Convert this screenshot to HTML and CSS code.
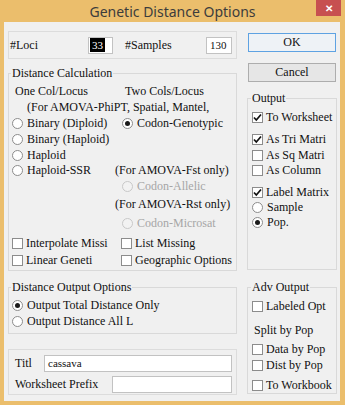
FILE: index.html
```html
<!DOCTYPE html>
<html lang="en">
<head>
    <meta charset="UTF-8">
    <meta name="viewport" content="width=device-width, initial-scale=1.0">
    <title>Genetic Distance Options</title>
    <link rel="stylesheet" href="styles.css">
</head>
<body>

    <div class="window">
        <div class="titlebar">
            <span class="title">Genetic Distance Options</span>
            <span class="close">&#10005;</span>
        </div>

        <div class="client">
            <!-- Coluna da esquerda -->
            <div class="left">
                <div class="panel counts">
                    <span class="lbl-loci">#Loci</span>
                    <span class="field loci"><span class="sel">33</span></span>
                    <span class="lbl-samples">#Samples</span>
                    <span class="field samples">130</span>
                </div>

                <fieldset class="group calc">
                    <legend>Distance Calculation</legend>
                    <div class="calc-grid">
                        <span class="cell ind3">One Col/Locus</span>
                        <span class="cell ind10">Two Cols/Locus</span>

                        <span class="cell span2 ind15">(For AMOVA-PhiPT, Spatial, Mantel,</span>

                        <span class="cell"><i class="radio"></i>Binary (Diploid)</span>
                        <span class="cell ind7"><i class="radio on"></i>Codon-Genotypic</span>

                        <span class="cell"><i class="radio"></i>Binary (Haploid)</span>
                        <span class="cell"></span>

                        <span class="cell"><i class="radio"></i>Haploid</span>
                        <span class="cell"></span>

                        <span class="cell"><i class="radio"></i>Haploid-SSR</span>
                        <span class="cell">(For AMOVA-Fst only)</span>

                        <span class="cell"></span>
                        <span class="cell ind7 disabled"><i class="radio"></i>Codon-Allelic</span>

                        <span class="cell"></span>
                        <span class="cell">(For AMOVA-Rst only)</span>

                        <span class="cell"></span>
                        <span class="cell ind7 disabled"><i class="radio"></i>Codon-Microsat</span>

                        <span class="cell"><i class="check"></i>Interpolate Missi</span>
                        <span class="cell ind6"><i class="check"></i>List Missing</span>

                        <span class="cell"><i class="check"></i>Linear Geneti</span>
                        <span class="cell ind6"><i class="check"></i>Geographic Options</span>
                    </div>
                </fieldset>

                <fieldset class="group dist-out">
                    <legend>Distance Output Options</legend>
                    <div class="row h16"><i class="radio on"></i>Output Total Distance Only</div>
                    <div class="row h16"><i class="radio"></i>Output Distance All L</div>
                </fieldset>

                <div class="panel names">
                    <div class="row h16">
                        <span class="lbl-titl">Titl</span>
                        <span class="field grow">cassava</span>
                    </div>
                    <div class="row h16 gap5">
                        <span class="lbl-prefix">Worksheet Prefix</span>
                        <span class="field grow"></span>
                    </div>
                </div>
            </div>

            <!-- Coluna da direita -->
            <div class="right">
                <button class="btn default">OK</button>
                <button class="btn cancel">Cancel</button>

                <fieldset class="group output">
                    <legend>Output</legend>
                    <div class="row h16"><i class="check"><svg viewBox="0 0 11 11"><path d="M2 5.5 L4.3 8 L9 2.5"/></svg></i>To Worksheet</div>
                    <div class="row h16 mt6"><i class="check"><svg viewBox="0 0 11 11"><path d="M2 5.5 L4.3 8 L9 2.5"/></svg></i>As Tri Matri</div>
                    <div class="row h16"><i class="check"></i>As Sq Matri</div>
                    <div class="row h15"><i class="check"></i>As Column</div>
                    <div class="row h16 mt6"><i class="check"><svg viewBox="0 0 11 11"><path d="M2 5.5 L4.3 8 L9 2.5"/></svg></i>Label Matrix</div>
                    <div class="row h15"><i class="radio"></i>Sample</div>
                    <div class="row h15"><i class="radio on"></i>Pop.</div>
                </fieldset>

                <fieldset class="group adv">
                    <legend>Adv Output</legend>
                    <div class="row h16"><i class="check"></i>Labeled Opt</div>
                    <div class="row h16 mt8 ind2">Split by Pop</div>
                    <div class="row h16 mt3"><i class="check"></i>Data by Pop</div>
                    <div class="row h16"><i class="check"></i>Dist by Pop</div>
                    <div class="row h15 mt5"><i class="check"></i>To Workbook</div>
                </fieldset>
            </div>
        </div>
    </div>

</body>
</html>
```

FILE: styles.css
```css
body {
    margin: 0;
    background: #ffffff;
}

/* Moldura da janela */
.window {
    width: 345px;
    height: 405px;
    background-color: #ebbe6c;
    display: flex;
    flex-direction: column;
}

.titlebar {
    height: 22px;
    position: relative;
    display: flex;
    align-items: center;
    justify-content: center;
    font-family: "Noto Sans", sans-serif;
    font-size: 14px;
    color: #3c3c3c;
}

.close {
    position: absolute;
    right: 4px;
    top: 0;
    width: 25px;
    height: 16px;
    background-color: #c75050;
    color: #ffffff;
    font-size: 10px;
    font-weight: bold;
    display: flex;
    align-items: center;
    justify-content: center;
}

/* Area do dialogo */
.client {
    flex: 1;
    margin: 0 5px 4px 4px;
    padding: 9px 3px 0 4px;
    background-color: #f0f0f0;
    display: flex;
    gap: 10px;
    font-family: "Liberation Serif", serif;
    font-size: 12px;
    color: #111111;
}

.left {
    width: 229px;
    display: flex;
    flex-direction: column;
}

.right {
    width: 90px;
    display: flex;
    flex-direction: column;
}

.panel {
    box-sizing: border-box;
    border: 1px solid #dcdcdc;
}

.counts {
    height: 28px;
    padding-left: 1px;
    display: flex;
    align-items: center;
}

.lbl-loci { width: 78px; }
.lbl-samples { width: 81px; margin-left: 12px; }

.field {
    box-sizing: border-box;
    height: 17px;
    background: #ffffff;
    border: 1px solid #c2c2c2;
    display: flex;
    align-items: center;
    padding-left: 3px;
    font-size: 11px;
}

.loci { width: 25px; padding-left: 1px; }
.samples { width: 26px; padding-left: 3px; }

.sel {
    background: #000000;
    color: #ffffff;
    padding: 1px 2px;
}

.grow { flex: 1; }

/* Caixas de grupo */
.group {
    box-sizing: border-box;
    margin: 0;
    border: 1px solid #d9d9d9;
    min-width: 0;
}

.group legend {
    padding: 0 1px;
    margin-left: -1px;
    line-height: 14px;
}

.calc {
    margin-top: 7px;
    padding: 3px 3px 2px 3px;
}

.calc-grid {
    display: grid;
    grid-template-columns: 103px 1fr;
    grid-template-rows: 16px 16px 17px 15px 16px 15px 17px 18px 21px 18px 16px;
}

.cell {
    display: flex;
    align-items: center;
    white-space: nowrap;
}

.span2 { grid-column: span 2; }
.ind2 { margin-left: 2px; }
.ind3 { margin-left: 3px; }
.ind6 { margin-left: 6px; }
.ind7 { margin-left: 7px; }
.ind10 { margin-left: 10px; }
.ind15 { margin-left: 15px; }

.dist-out {
    margin-top: 9px;
    padding: 3px 3px 4px 3px;
}

.names {
    margin-top: 15px;
    height: 46px;
    padding: 5px 4px 0 6px;
}

.lbl-titl { width: 29px; }
.lbl-prefix { width: 97px; }

.row {
    display: flex;
    align-items: center;
    white-space: nowrap;
}

.h15 { height: 15px; }
.h16 { height: 16px; }
.gap5 { margin-top: 5px; }
.mt3 { margin-top: 3px; }
.mt5 { margin-top: 5px; }
.mt6 { margin-top: 6px; }
.mt8 { margin-top: 8px; }

/* Botoes */
.btn {
    box-sizing: border-box;
    height: 19px;
    margin: 0 1px;
    font-family: "Liberation Serif", serif;
    font-size: 12px;
    color: #111111;
    padding: 0;
}

.default {
    margin-top: 2px;
    background-color: #eef2f6;
    border: 1px solid #5ea2e2;
}

.cancel {
    margin-top: 11px;
    background-color: #e6e6e6;
    border: 1px solid #adadad;
}

.output {
    margin-top: 9px;
    padding: 4px 3px 39px 4px;
}

.adv {
    margin-top: 10px;
    padding: 4px 3px 0 4px;
    flex: 1;
    margin-bottom: 7px;
}

/* Radio e checkbox */
.radio,
.check {
    box-sizing: border-box;
    width: 11px;
    height: 11px;
    flex: none;
    margin-right: 4px;
    background: #ffffff;
    border: 1px solid #8c8c8c;
    position: relative;
}

.check { margin-right: 3px; }

.radio { border-radius: 50%; }

.radio.on::after {
    content: "";
    position: absolute;
    left: 2px;
    top: 2px;
    width: 5px;
    height: 5px;
    border-radius: 50%;
    background: #1a1a1a;
}

.check svg {
    position: absolute;
    left: -1px;
    top: -1px;
    width: 11px;
    height: 11px;
    fill: none;
    stroke: #111111;
    stroke-width: 1.7;
}

.disabled { color: #a6a6a6; }
.disabled .radio {
    border-color: #c8c8c8;
    background: #f2f2f2;
}
```
